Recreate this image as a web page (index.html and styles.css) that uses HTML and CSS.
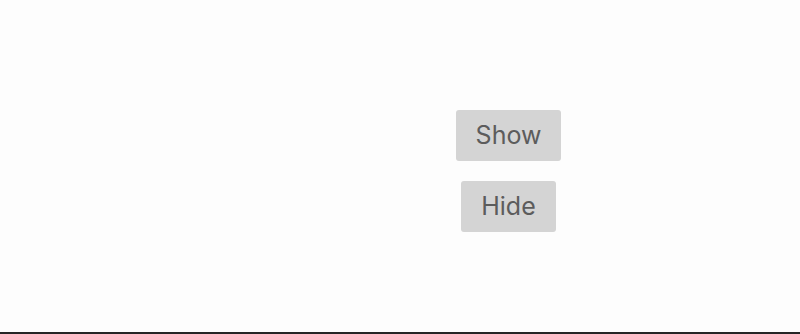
FILE: index.html
```html
<!DOCTYPE html>
<html>
<head>
<meta charset="utf-8">
<link rel="stylesheet" href="styles.css">
</head>
<body>
<div class="stage">
  <div class="controls">
    <button class="btn">Show</button>
    <button class="btn">Hide</button>
  </div>
</div>
</body>
</html>
```
FILE: styles.css
```css
html, body {
  margin: 0;
  padding: 0;
  background: #fdfdfd;
}
.stage {
  height: 332px;
  border-bottom: 2px solid #262626;
  display: flex;
  align-items: flex-start;
  justify-content: flex-start;
}
.controls {
  margin-left: 456px;
  width: 105px;
  padding-top: 110px;
  display: flex;
  flex-direction: column;
  align-items: center;
  gap: 20px;
}
.btn {
  font-family: Inter, "Noto Sans", sans-serif;
  font-size: 25px;
  color: #5c5c5c;
  background: #d4d4d4;
  border: none;
  border-radius: 3px;
  height: 51px;
  padding: 0 20px;
  line-height: 51px;
}
```
